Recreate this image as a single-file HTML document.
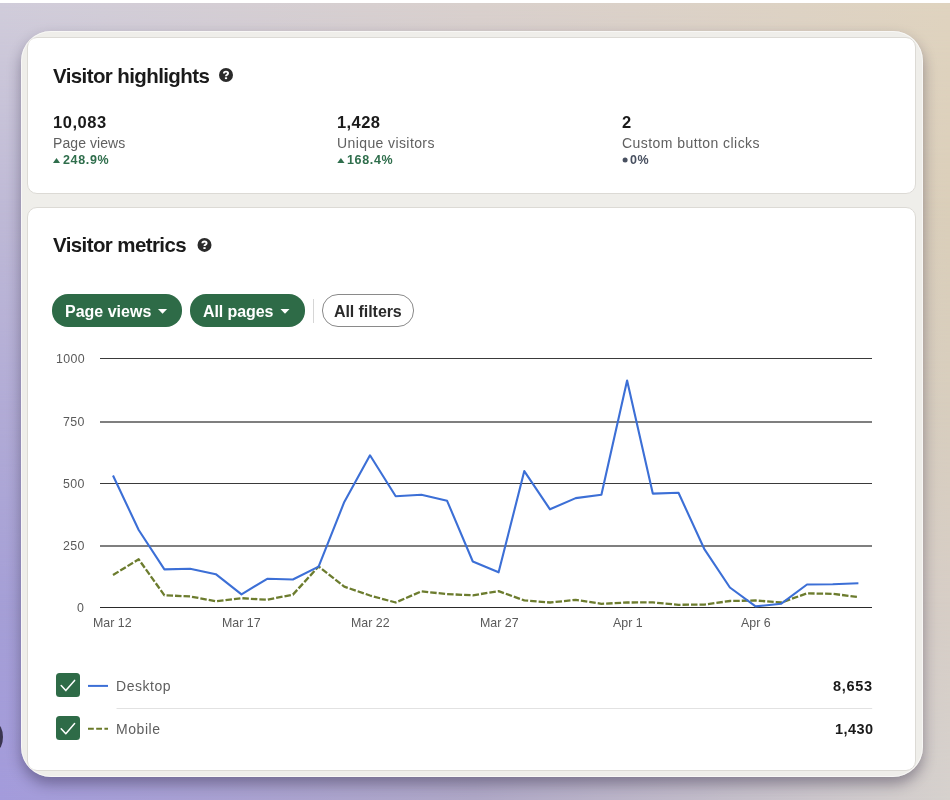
<!DOCTYPE html>
<html><head><meta charset="utf-8">
<style>
*{box-sizing:border-box;margin:0;padding:0}
html,body{width:950px;height:800px;overflow:hidden}
body{position:relative;font-family:"Liberation Sans",sans-serif;background:#c8c0d0}
.bg{position:absolute;left:0;top:0;width:950px;height:800px}
.bg0{background:linear-gradient(to right,#d1cddb 0%,#dad1cd 50%,#e0d4c0 100%)}
.bga{background:linear-gradient(to right,#bfbad6 0%,#cbc3cf 50%,#dbcfba 100%);-webkit-mask-image:linear-gradient(to bottom,transparent 0px,#000 200px);mask-image:linear-gradient(to bottom,transparent 0px,#000 200px)}
.bgb{background:linear-gradient(to right,#b2acd6 0%,#c3bcca 50%,#d8cebe 100%);-webkit-mask-image:linear-gradient(to bottom,transparent 200px,#000 400px);mask-image:linear-gradient(to bottom,transparent 200px,#000 400px)}
.bgc{background:linear-gradient(to right,#a59fd6 0%,#b8b0c8 50%,#d7cec6 100%);-webkit-mask-image:linear-gradient(to bottom,transparent 400px,#000 600px);mask-image:linear-gradient(to bottom,transparent 400px,#000 600px)}
.bgd{background:linear-gradient(to right,#a39bdb 0%,#aea7c6 50%,#d6d1cd 100%);-webkit-mask-image:linear-gradient(to bottom,transparent 600px,#000 800px);mask-image:linear-gradient(to bottom,transparent 600px,#000 800px)}
.topstrip{position:absolute;left:0;top:0;width:950px;height:3px;background:#fff}
.frame{position:absolute;left:21px;top:31px;width:902px;height:746px;border-radius:30px;background:#efeeea;box-shadow:0 7px 14px rgba(30,20,50,.38)}
.clip{position:absolute;left:21px;top:31px;width:902px;height:746px;border-radius:30px;overflow:hidden}
.card{position:absolute;left:6px;width:889px;background:#fff;border:1px solid #dcdad5;border-radius:10px}
.c1{top:6px;height:157px}
.c2{top:176px;height:564px}
.rim{position:absolute;left:21px;top:31px;width:902px;height:746px;border-radius:30px;box-shadow:inset 0 0 0 1px rgba(255,255,255,.55)}
.t{position:absolute;white-space:nowrap;line-height:1;will-change:transform}
.h{font-weight:700;font-size:20.5px;color:#1a1a1a;letter-spacing:-0.6px}
.num{font-weight:700;font-size:16.5px;color:#1a1a1a}
.lbl{font-size:14px;color:#606060}
.pct{font-weight:700;font-size:12.5px;color:#2f6e4c;letter-spacing:0.65px}
.btn{position:absolute;top:294px;height:32.5px;border-radius:16px;background:#2e6b47}
.btxt{font-weight:700;font-size:16px;color:#fff}
.btn2{position:absolute;top:294px;left:322px;width:92px;height:32.5px;border-radius:16px;border:1px solid #8a8a8a;background:#fff}
.ax{font-size:12.4px;color:#5a5a5a}
.cb{position:absolute;left:56px;width:24px;height:24px;border-radius:3.5px;background:#2e6b47}
.legt{font-size:14px;color:#5e5e5e;letter-spacing:0.55px}
.legn{font-weight:700;font-size:14.5px;color:#1a1a1a;letter-spacing:0.7px}
</style></head><body>
<div class="bg bg0"></div><div class="bg bga"></div><div class="bg bgb"></div><div class="bg bgc"></div><div class="bg bgd"></div>
<div class="topstrip"></div>
<div class="frame"></div>
<div class="clip"><div class="card c1"></div>
<div class="card c2"></div></div>
<div class="rim"></div>

<!-- highlights -->
<div class="t h" style="left:53px;top:65.65px">Visitor highlights</div>

<div class="t num" style="left:53px;top:113.9px;letter-spacing:0.54px">10,083</div>
<div class="t lbl" style="left:53px;top:135.6px;letter-spacing:0.08px">Page views</div>
<div class="t pct" style="left:62.5px;top:153.6px">248.9%</div>

<div class="t num" style="left:337px;top:113.9px;letter-spacing:0.43px">1,428</div>
<div class="t lbl" style="left:337px;top:135.6px;letter-spacing:0.4px">Unique visitors</div>
<div class="t pct" style="left:347px;top:153.6px">168.4%</div>

<div class="t num" style="left:622px;top:113.9px">2</div>
<div class="t lbl" style="left:622px;top:135.6px;letter-spacing:0.44px">Custom button clicks</div>
<div class="t pct" style="left:630.2px;top:153.6px;color:#485060">0%</div>

<!-- metrics -->
<div class="t h" style="left:53px;top:234.65px">Visitor metrics</div>

<div class="btn" style="left:52px;width:130px"></div>
<div class="btn" style="left:190px;width:115px"></div>
<div class="t btxt" style="left:65px;top:304px">Page views</div>
<div class="t btxt" style="left:203px;top:304px;letter-spacing:-0.1px">All pages</div>
<div style="position:absolute;left:313px;top:298.5px;width:1px;height:24px;background:#d6d6d6"></div>
<div class="btn2"></div>
<div class="t btxt" style="left:334px;top:304px;color:#2a2a2a;letter-spacing:-0.07px">All filters</div>

<div class="t ax" style="left:56px;top:353.4px;letter-spacing:0.4px">1000</div>
<div class="t ax" style="left:63px;top:415.7px;letter-spacing:0.4px">750</div>
<div class="t ax" style="left:63px;top:478px;letter-spacing:0.4px">500</div>
<div class="t ax" style="left:63px;top:540.3px;letter-spacing:0.4px">250</div>
<div class="t ax" style="left:77px;top:601.7px">0</div>

<div class="t ax" style="left:93px;top:617.3px">Mar 12</div>
<div class="t ax" style="left:222px;top:617.3px">Mar 17</div>
<div class="t ax" style="left:351px;top:617.3px">Mar 22</div>
<div class="t ax" style="left:480px;top:617.3px">Mar 27</div>
<div class="t ax" style="left:613px;top:617.3px">Apr 1</div>
<div class="t ax" style="left:741px;top:617.3px">Apr 6</div>

<div class="cb" style="top:673.3px"></div>
<div class="cb" style="top:716.4px"></div>
<div class="t legt" style="left:116px;top:678.85px">Desktop</div>
<div class="t legt" style="left:116px;top:722.2px">Mobile</div>
<div class="t legn" style="left:833px;top:678.6px">8,653</div>
<div class="t legn" style="left:834.6px;top:721.5px;letter-spacing:0.45px">1,430</div>

<svg style="position:absolute;left:0;top:0" width="950" height="800" viewBox="0 0 950 800">
  <!-- question icons -->
  <g transform="translate(219 68)">
    <circle cx="7" cy="7" r="7" fill="#2b2b2b"/>
    <path d="M4.9 5.4 C4.9 4.1 5.9 3.6 7 3.6 C8.2 3.6 9.1 4.3 9.1 5.3 C9.1 6.3 8.3 6.6 7.7 7 C7.2 7.3 7 7.6 7 8.2" stroke="#fff" stroke-width="1.9" fill="none"/>
    <rect x="5.9" y="9.3" width="2.2" height="1.8" fill="#fff"/>
  </g>
  <g transform="translate(197.5 237.9)">
    <circle cx="7" cy="7" r="7" fill="#2b2b2b"/>
    <path d="M4.9 5.4 C4.9 4.1 5.9 3.6 7 3.6 C8.2 3.6 9.1 4.3 9.1 5.3 C9.1 6.3 8.3 6.6 7.7 7 C7.2 7.3 7 7.6 7 8.2" stroke="#fff" stroke-width="1.9" fill="none"/>
    <rect x="5.9" y="9.3" width="2.2" height="1.8" fill="#fff"/>
  </g>
  <!-- triangles / dot -->
  <path d="M53 163 L56.5 158 L60 163 Z" fill="#2f6e4c"/>
  <path d="M337.3 163.1 L340.9 158 L344.5 163.1 Z" fill="#2f6e4c"/>
  <circle cx="625.1" cy="160.1" r="2.5" fill="#485060"/>
  <!-- carets -->
  <g fill="#fff"><path d="M158 309 h9.1 l-4.55 4.8 z"/><path d="M280.5 309 h9 l-4.5 4.8 z"/></g>
  <!-- gridlines -->
  <g stroke="#3a3a3a" fill="none">
    <line x1="100" y1="358.5" x2="872" y2="358.5" stroke-width="1"/>
    <line x1="100" y1="422" x2="872" y2="422" stroke-width="1.3" stroke="#555"/>
    <line x1="100" y1="483.5" x2="872" y2="483.5" stroke-width="1"/>
    <line x1="100" y1="546" x2="872" y2="546" stroke-width="1.3" stroke="#555"/>
    <line x1="100" y1="607.5" x2="872" y2="607.5" stroke-width="1.1" stroke="#2a2a2a"/>
  </g>
  <polyline fill="none" stroke="#6c7c2e" stroke-width="2.3" stroke-dasharray="6.5 2" stroke-linejoin="round" points="113.0,575.0 138.7,559.3 164.4,595.3 190.1,596.4 215.8,601.3 241.5,598.2 267.2,599.8 292.9,594.6 318.6,566.5 344.3,586.7 370.0,595.5 395.7,602.5 421.4,591.4 447.1,594.1 472.8,595.3 498.6,591.2 524.3,600.4 550.0,602.5 575.7,599.9 601.4,603.8 627.1,602.5 652.8,602.4 678.5,604.8 704.2,604.6 729.9,601.0 755.6,600.5 781.3,602.5 807.0,593.4 832.7,593.8 858.4,597.1"/>
  <polyline fill="none" stroke="#3c6fd6" stroke-width="2.1" stroke-linejoin="round" points="113.0,475.5 138.7,530.0 164.4,569.4 190.1,568.7 215.8,574.2 241.5,594.4 267.2,578.8 292.9,579.5 318.6,566.6 344.3,501.9 370.0,455.3 395.7,496.3 421.4,494.7 447.1,500.8 472.8,561.5 498.6,572.3 524.3,471.1 550.0,509.3 575.7,498.1 601.4,494.8 627.1,380.5 652.8,493.6 678.5,492.8 704.2,548.8 729.9,587.5 755.6,606.4 781.3,603.7 807.0,584.5 832.7,584.2 858.4,583.2"/>
  <!-- legend lines -->
  <line x1="88" y1="685.9" x2="108" y2="685.9" stroke="#3c6fd6" stroke-width="2"/>
  <line x1="88" y1="728.8" x2="108" y2="728.8" stroke="#6a7a28" stroke-width="2" stroke-dasharray="5.8 2.4"/>
  <line x1="116.5" y1="708.5" x2="872.2" y2="708.5" stroke="#e2e2e2" stroke-width="1"/>
  <g stroke="#fff" stroke-width="1.5" fill="none" stroke-linecap="round" stroke-linejoin="round">
    <path d="M61.2 685.6 L65.8 690.6 L74.6 680.4"/>
    <path d="M61.2 728.8 L65.8 733.8 L74.6 723.6"/>
  </g>
</svg>

<div style="position:absolute;left:-10px;top:724px;width:13px;height:26px;border-radius:50%;background:#3a3550"></div>
</body></html>
